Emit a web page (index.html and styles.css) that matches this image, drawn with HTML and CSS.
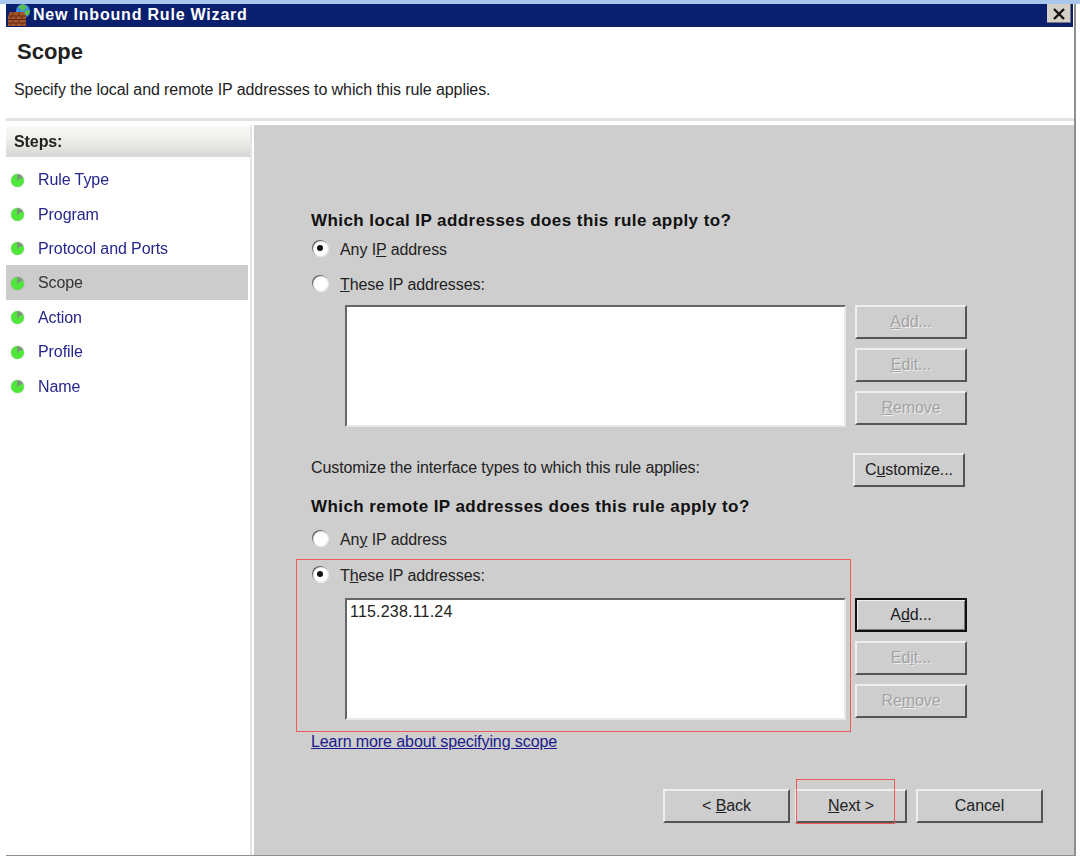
FILE: index.html
```html
<!DOCTYPE html>
<html lang="en">
<head>
    <meta charset="UTF-8">
    <title>New Inbound Rule Wizard</title>
    <link rel="stylesheet" href="styles.css">
</head>
<body>
    <div class="top-strip"></div>
    <div class="window">
        <div class="titlebar">
            <svg class="app-icon" width="26" height="23" viewBox="0 0 26 23">
                <circle cx="17" cy="7" r="7" fill="#3f8fe0"/>
                <path d="M12 3l5-3 4 3-4 4z" fill="#5cc04a"/>
                <path d="M19 7l5-1-1 5-4 0z" fill="#5cc04a"/>
                <path d="M2 12l2-4h14l2 4v10H2z" fill="#a8552c"/>
                <path d="M2 12h18M2 15.500h18M2 19h18M7 8v4M13 8v4M5 12v3.500M10 12v3.500M16 12v3.500M7 15.500v3.500M13 15.500v3.500M5 19v3M10 19v3M16 19v3" stroke="#5e2c16" stroke-width="1" fill="none"/>
            </svg>
            <span class="title-text">New Inbound Rule Wizard</span>
            <div class="close-btn">
                <svg width="14" height="12" viewBox="0 0 14 12">
                    <path d="M2 1l10 10M12 1L2 11" stroke="#111" stroke-width="2.400" fill="none"/>
                </svg>
            </div>
        </div>

        <div class="header">
            <h1>Scope</h1>
            <p>Specify the local and remote IP addresses to which this rule applies.</p>
        </div>

        <div class="content">
            <div class="sidebar">
                <div class="steps-head">Steps:</div>
                <ul class="steps">
                    <li><span class="dot"></span>Rule Type</li>
                    <li><span class="dot"></span>Program</li>
                    <li><span class="dot"></span>Protocol and Ports</li>
                    <li class="current"><span class="dot"></span>Scope</li>
                    <li><span class="dot"></span>Action</li>
                    <li><span class="dot"></span>Profile</li>
                    <li><span class="dot"></span>Name</li>
                </ul>
            </div>

            <div class="main">
                <h2 class="question">Which local IP addresses does this rule apply to?</h2>
                <div class="radio-row any"><span class="radio on"></span><span>Any I<u>P</u> address</span></div>
                <div class="radio-row these"><span class="radio"></span><span><u>T</u>hese IP addresses:</span></div>
                <div class="list-row">
                    <div class="listbox"></div>
                    <div class="side-buttons">
                        <button class="btn" disabled><u>A</u>dd...</button>
                        <button class="btn" disabled><u>E</u>dit...</button>
                        <button class="btn" disabled><u>R</u>emove</button>
                    </div>
                </div>

                <div class="customize-row">
                    <span class="customize-text">Customize the interface types to which this rule applies:</span>
                    <button class="btn">C<u>u</u>stomize...</button>
                </div>

                <h2 class="question">Which remote IP addresses does this rule apply to?</h2>
                <div class="radio-row any2"><span class="radio"></span><span>An<u>y</u> IP address</span></div>
                <div class="radio-row these2"><span class="radio on"></span><span>T<u>h</u>ese IP addresses:</span></div>
                <div class="list-row remote">
                    <div class="listbox">115.238.11.24</div>
                    <div class="side-buttons">
                        <button class="btn default">A<u>d</u>d...</button>
                        <button class="btn" disabled>Ed<u>i</u>t...</button>
                        <button class="btn" disabled>Re<u>m</u>ove</button>
                    </div>
                </div>

                <a class="learn" href="#">Learn more about specifying scope</a>

                <div class="footer">
                    <button class="btn back">&lt; <u>B</u>ack</button>
                    <button class="btn next"><u>N</u>ext &gt;</button>
                    <button class="btn cancel">Cancel</button>
                </div>

                <div class="mark mark-list"></div>
                <div class="mark mark-next"></div>
            </div>
        </div>
    </div>
</body>
</html>
```

FILE: styles.css
```css
html, body {
    margin: 0;
    padding: 0;
}

body {
    width: 1080px;
    height: 856px;
    overflow: hidden;
    background-color: white;
    font-family: "Liberation Sans", Arial, sans-serif;
    font-size: 16px;
    letter-spacing: -0.090px;
    color: #222;
}

.top-strip {
    height: 4px;
    background-color: #a9c7ec;
}

.window {
    width: 1068px;
    margin-left: 6px;
    border-right: 2px solid #8f8f8f;
    border-bottom: 1px solid #8f8f8f;
    filter: blur(0.4px);
}

/* title bar */
.titlebar {
    display: flex;
    align-items: center;
    width: 1067px;
    height: 23px;
    background-color: #0a1f6e;
    position: relative;
}

.app-icon {
    margin-top: -1px;
    flex: none;
}

.title-text {
    margin-left: 1px;
    margin-top: -2px;
    font-size: 16px;
    font-weight: bold;
    letter-spacing: 0.800px;
    color: white;
}

.close-btn {
    position: absolute;
    right: 2px;
    top: 0;
    width: 24px;
    height: 19px;
    display: flex;
    align-items: center;
    justify-content: center;
    background-color: #d4d0c8;
    box-shadow: inset -1px -1px 0 #777;
}

/* header */
.header {
    height: 91px;
    background-color: white;
    border-bottom: 3px solid #e2e2e2;
    overflow: hidden;
}

.header h1 {
    margin: 13px 0 0 11px;
    font-size: 22px;
    line-height: 24px;
    font-weight: bold;
    letter-spacing: 0;
    color: #222;
}

.header p {
    margin: 16px 0 0 8px;
    font-size: 16px;
    line-height: 20px;
}

/* body */
.content {
    display: flex;
    height: 730px;
    margin-top: 4px;
}

.sidebar {
    width: 244px;
    flex: none;
    border-right: 2px solid #e4e4e4;
    margin-right: 2px;
}

.steps-head {
    height: 31px;
    margin-top: 1px;
    padding-left: 8px;
    line-height: 31px;
    font-weight: bold;
    color: #222;
    background: linear-gradient(#fafafa, #f0f0ea 40%, #d6d6d6);
}

.steps {
    list-style: none;
    margin: 5px 0 0 0;
    padding: 0;
}

.steps li {
    display: flex;
    align-items: center;
    box-sizing: border-box;
    height: 34.400px;
    padding: 2px 0 0 5px;
    color: #26268c;
}

.steps li.current {
    width: 242px;
    background-color: #cccccc;
    color: #333;
}

.dot {
    width: 13px;
    height: 13px;
    margin-right: 14px;
    border-radius: 50%;
    background: conic-gradient(#7a9a78 0 60deg, #4fe83a 60deg 360deg);
    box-shadow: 0 0 1px #4a7a40;
}

.main {
    position: relative;
    flex: 1;
    padding: 85px 0 0 57px;
    background-color: #cecece;
}

.question {
    margin: 0;
    height: 20px;
    font-size: 17px;
    line-height: 22px;
    font-weight: bold;
    color: #111;
    letter-spacing: 0.430px;
}

.customize-row + .question {
    margin-top: 9px;
}

.radio-row {
    display: flex;
    align-items: center;
    box-sizing: border-box;
    height: 24px;
    padding: 4px 0 0 1px;
}

.radio-row.any {
    margin-top: 6px;
}

.radio-row.these {
    margin-top: 11px;
}

.radio-row.any2 {
    margin-top: 10px;
}

.radio-row.these2 {
    margin-top: 12px;
}

.radio {
    position: relative;
    width: 16px;
    height: 16px;
    margin: -4px 12px 0 0;
    border-radius: 50%;
    background-color: white;
    box-shadow: inset 1px 1px 1px #555, 1px 1px 1px #eee;
    flex: none;
}

.radio.on::after {
    content: "";
    position: absolute;
    left: 5px;
    top: 5px;
    width: 6px;
    height: 6px;
    border-radius: 50%;
    background-color: #111;
}

.list-row {
    display: flex;
    gap: 9px;
    margin: 10px 0 0 34px;
}

.list-row.remote {
    margin-top: 12px;
}

.listbox {
    width: 501px;
    height: 122px;
    box-sizing: border-box;
    padding: 2px 3px;
    background-color: white;
    border: 2px solid;
    border-color: #666 #e8e8e8 #e8e8e8 #666;
    line-height: 20px;
    letter-spacing: 0.200px;
}

.side-buttons {
    display: flex;
    flex-direction: column;
    gap: 9px;
}

.btn {
    width: 112px;
    height: 34px;
    padding: 0;
    font-family: inherit;
    font-size: 16px;
    letter-spacing: inherit;
    color: #222;
    background-color: #cecece;
    border: 2px solid;
    border-color: #eeeeee #555 #555 #eeeeee;
}

.btn:disabled {
    color: #a2a2a2;
    text-shadow: 1px 1px 0 #f0f0f0;
}

.btn.default {
    border-color: #111;
    box-shadow: inset 1px 1px 0 #eee, inset -1px -1px 0 #777;
}

.customize-row {
    display: flex;
    justify-content: space-between;
    align-items: center;
    width: 654px;
    margin-top: 26px;
}

.customize-text {
    margin-top: -4px;
}

.learn {
    display: block;
    width: max-content;
    margin-top: 11px;
    line-height: 22px;
    height: 20px;
    color: #1a1a8c;
}

.footer {
    display: flex;
    margin: 38px 0 0 352px;
}

.back {
    width: 127px;
}

.next {
    margin-left: 5px;
}

.cancel {
    width: 127px;
    margin-left: 9px;
}

/* red annotation boxes drawn over the dialog */
.mark {
    position: absolute;
    border: 1px solid #ee5a5a;
    box-sizing: border-box;
}

.mark-list {
    left: 42px;
    top: 434px;
    width: 555px;
    height: 173px;
}

.mark-next {
    left: 542px;
    top: 654px;
    width: 99px;
    height: 45px;
}
```
